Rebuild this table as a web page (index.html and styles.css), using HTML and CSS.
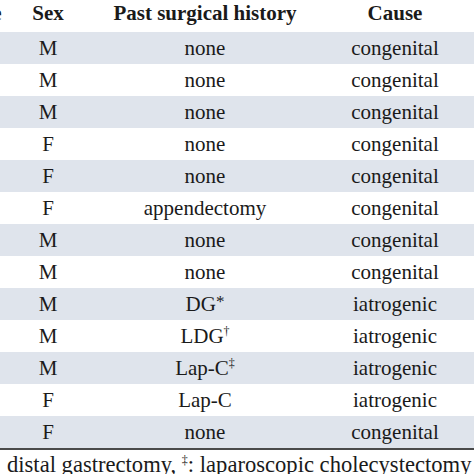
FILE: index.html
```html
<!DOCTYPE html>
<html>
<head>
<meta charset="utf-8">
<link rel="stylesheet" href="styles.css">
</head>
<body>
<div class="frame">
  <div class="table">
    <div class="row head">
      <div class="c age">Age</div>
      <div class="c">Sex</div>
      <div class="c">Past surgical history</div>
      <div class="c cause">Cause</div>
    </div>
    <div class="row alt"><div class="c age"></div><div class="c">M</div><div class="c">none</div><div class="c cause">congenital</div></div>
    <div class="row"><div class="c age"></div><div class="c">M</div><div class="c">none</div><div class="c cause">congenital</div></div>
    <div class="row alt"><div class="c age"></div><div class="c">M</div><div class="c">none</div><div class="c cause">congenital</div></div>
    <div class="row"><div class="c age"></div><div class="c">F</div><div class="c">none</div><div class="c cause">congenital</div></div>
    <div class="row alt"><div class="c age"></div><div class="c">F</div><div class="c">none</div><div class="c cause">congenital</div></div>
    <div class="row"><div class="c age"></div><div class="c">F</div><div class="c">appendectomy</div><div class="c cause">congenital</div></div>
    <div class="row alt"><div class="c age"></div><div class="c">M</div><div class="c">none</div><div class="c cause">congenital</div></div>
    <div class="row"><div class="c age"></div><div class="c">M</div><div class="c">none</div><div class="c cause">congenital</div></div>
    <div class="row alt"><div class="c age"></div><div class="c">M</div><div class="c">DG<sup class="ast">*</sup></div><div class="c cause">iatrogenic</div></div>
    <div class="row"><div class="c age"></div><div class="c">M</div><div class="c">LDG<sup>†</sup></div><div class="c cause">iatrogenic</div></div>
    <div class="row alt"><div class="c age"></div><div class="c">M</div><div class="c">Lap-C<sup>‡</sup></div><div class="c cause">iatrogenic</div></div>
    <div class="row"><div class="c age"></div><div class="c">F</div><div class="c">Lap-C</div><div class="c cause">iatrogenic</div></div>
    <div class="row alt"><div class="c age"></div><div class="c">F</div><div class="c">none</div><div class="c cause">congenital</div></div>
  </div>
  <p class="note">distal gastrectomy, <sup>‡</sup>: laparoscopic cholecystectomy</p>
</div>
</body>
</html>
```
FILE: styles.css
```css
html, body {
  margin: 0;
  padding: 0;
  background: #ffffff;
  overflow: hidden;
}
body {
  width: 474px;
  height: 474px;
  font-family: "Liberation Serif", "Times New Roman", serif;
  color: #1a1a1a;
}
.frame {
  width: 474px;
  overflow: hidden;
}
.table {
  margin-left: -51px;
  width: 525px;
  border-bottom: 2px solid #4a4a4a;
}
.row {
  display: grid;
  grid-template-columns: 70px 58px 256px 141px;
  height: 32px;
  align-items: center;
  font-size: 21px;
}
.row.head {
  font-weight: bold;
  height: 32px;
  align-items: start;
}
.row.head .c {
  line-height: 27px;
}
.row.alt {
  background: #dfe4ec;
}
.c {
  text-align: center;
  white-space: nowrap;
  line-height: 32px;
}
.cause {
  padding-right: 17px;
}
sup {
  font-size: 12px;
  line-height: 0;
  vertical-align: 8px;
}
sup.ast {
  font-size: 17px;
  vertical-align: 4px;
}
.note {
  margin: 0;
  padding: 3px 0 0 7px;
  font-size: 22.6px;
  line-height: 24px;
  white-space: nowrap;
}
.note sup {
  font-size: 12px;
  vertical-align: 8px;
}
```
